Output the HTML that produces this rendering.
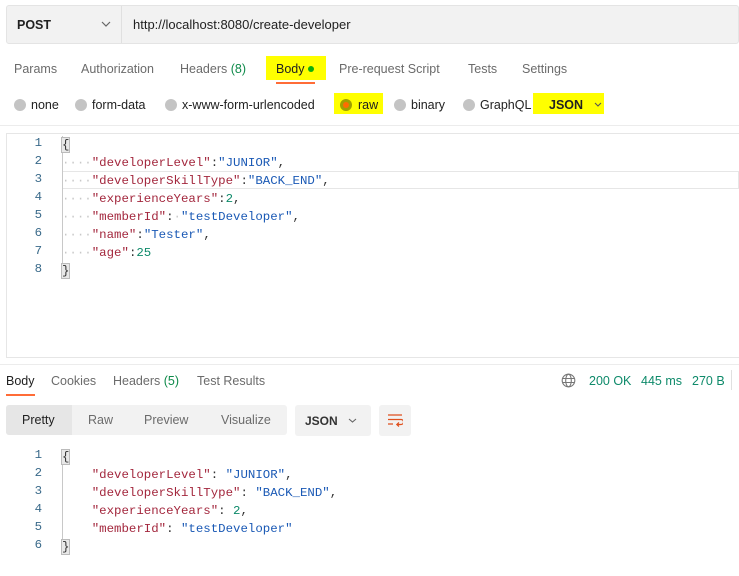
<!DOCTYPE html>
<html><head><meta charset="utf-8"><style>
*{box-sizing:border-box;margin:0;padding:0}
body{width:739px;height:576px;background:#fff;font-family:"Liberation Sans",sans-serif;font-size:12.5px;color:#212121;position:relative;overflow:hidden}
.a{position:absolute;white-space:nowrap}
.g{color:#6b6b6b}
.rad{position:absolute;width:12px;height:12px;border-radius:50%;background:#c4c4c4}
.code{font-family:"Liberation Mono",monospace;font-size:12.4px;color:#1f4fa0}
.ln{position:absolute;width:20px;text-align:right;color:#3a6a8a;font-family:"Liberation Mono",monospace;font-size:12.4px}
.k{color:#a3273d}.s{color:#1a59b5}.n{color:#0e8a6a}.d{color:#c8c8c8}.p{color:#333}
.hl{background:#ffff00}
</style></head><body>
<div class="a" style="left:6px;top:5px;width:733px;height:39px;background:#f2f2f2;border:1px solid #e4e4e4;border-radius:3px"></div>
<div class="a" style="left:121px;top:6px;width:1px;height:37px;background:#e0e0e0"></div>
<div class="a" style="left:17px;top:18px;font-weight:bold;font-size:12.5px;color:#212121">POST</div>
<svg class="a" style="left:101px;top:21px" width="10" height="6"><path d="M1 1l4 4 4-4" fill="none" stroke="#666" stroke-width="1.2"/></svg>
<div class="a" style="left:133px;top:17px;font-size:13px;color:#212121">http://localhost:8080/create-developer</div>

<div class="a g" style="left:14px;top:62px">Params</div>
<div class="a g" style="left:81px;top:62px">Authorization</div>
<div class="a g" style="left:180px;top:62px">Headers <span style="color:#0e8a4a">(8)</span></div>
<div class="a hl" style="left:266px;top:56px;width:60px;height:24px"></div>
<div class="a" style="left:276px;top:62px">Body</div>
<div class="a" style="left:308px;top:66px;width:6px;height:6px;border-radius:50%;background:#0cb00c"></div>
<div class="a" style="left:276px;top:82px;width:39px;height:2px;background:#ff6c37"></div>
<div class="a g" style="left:339px;top:62px">Pre-request Script</div>
<div class="a g" style="left:468px;top:62px">Tests</div>
<div class="a g" style="left:522px;top:62px">Settings</div>

<div class="rad" style="left:14px;top:99px"></div><div class="a" style="left:31px;top:98px">none</div>
<div class="rad" style="left:75px;top:99px"></div><div class="a" style="left:92px;top:98px">form-data</div>
<div class="rad" style="left:165px;top:99px"></div><div class="a" style="left:182px;top:98px">x-www-form-urlencoded</div>
<div class="a hl" style="left:334px;top:93px;width:49px;height:21px"></div>
<div class="rad" style="left:340px;top:99px;background:#a0a000"></div><div class="a" style="left:343px;top:102px;width:6px;height:6px;border-radius:50%;background:#ff6c00"></div>
<div class="a" style="left:358px;top:98px">raw</div>
<div class="rad" style="left:394px;top:99px"></div><div class="a" style="left:411px;top:98px">binary</div>
<div class="rad" style="left:463px;top:99px"></div><div class="a" style="left:480px;top:98px">GraphQL</div>
<div class="a hl" style="left:533px;top:93px;width:71px;height:21px"></div>
<div class="a" style="left:549px;top:98px;font-weight:bold;color:#222">JSON</div>
<svg class="a" style="left:594px;top:102px" width="8" height="5"><path d="M1 1l3 3 3-3" fill="none" stroke="#555" stroke-width="1.1"/></svg>
<div class="a" style="left:0;top:125px;width:739px;height:1px;background:#ececec"></div>

<div class="a" style="left:6px;top:133px;width:733px;height:225px;border:1px solid #e6e6e6;border-right:none"></div>
<div class="a" style="left:62px;top:136px;width:1px;height:142px;background:#c8c8c8"></div>
<div class="a" style="left:63px;top:171px;width:676px;height:18px;border:1px solid #e6e6e6;border-left:none"></div>
<div class="ln" style="left:22px;top:136px">1</div><div class="ln" style="left:22px;top:154px">2</div><div class="ln" style="left:22px;top:172px">3</div><div class="ln" style="left:22px;top:190px">4</div><div class="ln" style="left:22px;top:208px">5</div><div class="ln" style="left:22px;top:226px">6</div><div class="ln" style="left:22px;top:244px">7</div><div class="ln" style="left:22px;top:262px">8</div>
<div class="a code" style="left:62px;top:136px;line-height:18px">
<div><span class="p" style="background:#e8e8e8;outline:1px solid #bbb">{</span></div>
<div><span class="d">····</span><span class="k">"developerLevel"</span><span class="p">:</span><span class="s">"JUNIOR"</span><span class="p">,</span></div>
<div><span class="d">····</span><span class="k">"developerSkillType"</span><span class="p">:</span><span class="s">"BACK_END"</span><span class="p">,</span></div>
<div><span class="d">····</span><span class="k">"experienceYears"</span><span class="p">:</span><span class="n">2</span><span class="p">,</span></div>
<div><span class="d">····</span><span class="k">"memberId"</span><span class="p">:</span><span class="d">·</span><span class="s">"testDeveloper"</span><span class="p">,</span></div>
<div><span class="d">····</span><span class="k">"name"</span><span class="p">:</span><span class="s">"Tester"</span><span class="p">,</span></div>
<div><span class="d">····</span><span class="k">"age"</span><span class="p">:</span><span class="n">25</span></div>
<div><span class="p" style="background:#e8e8e8;outline:1px solid #bbb">}</span></div>
</div>

<div class="a" style="left:0;top:364px;width:739px;height:1px;background:#ececec"></div>
<div class="a" style="left:6px;top:374px">Body</div>
<div class="a" style="left:6px;top:394px;width:29px;height:2px;background:#ff6c37"></div>
<div class="a g" style="left:51px;top:374px">Cookies</div>
<div class="a g" style="left:113px;top:374px">Headers <span style="color:#0e8a4a">(5)</span></div>
<div class="a g" style="left:197px;top:374px">Test Results</div>
<svg class="a" style="left:561px;top:373px" width="15" height="15" fill="none" stroke="#777" stroke-width="1.1"><circle cx="7.5" cy="7.5" r="6.3"/><ellipse cx="7.5" cy="7.5" rx="2.8" ry="6.3"/><path d="M1.5 5.5h12M1.5 9.5h12"/></svg>
<div class="a" style="left:589px;top:374px;color:#0e8a6a">200 OK</div>
<div class="a" style="left:641px;top:374px;color:#0e8a6a">445 ms</div>
<div class="a" style="left:692px;top:374px;color:#0e8a6a">270 B</div>
<div class="a" style="left:731px;top:370px;width:1px;height:20px;background:#e0e0e0"></div>

<div class="a" style="left:6px;top:405px;width:281px;height:30px;background:#f2f2f2;border-radius:3px"></div>
<div class="a" style="left:6px;top:405px;width:66px;height:30px;background:#e6e6e6;border-radius:3px 0 0 3px"></div>
<div class="a" style="left:22px;top:413px">Pretty</div>
<div class="a g" style="left:88px;top:413px">Raw</div>
<div class="a g" style="left:144px;top:413px">Preview</div>
<div class="a g" style="left:221px;top:413px">Visualize</div>
<div class="a" style="left:295px;top:405px;width:76px;height:31px;background:#f2f2f2;border-radius:3px"></div>
<div class="a" style="left:305px;top:414px;font-weight:bold;font-size:12px;color:#333">JSON</div>
<svg class="a" style="left:348px;top:418px" width="9" height="5"><path d="M1 1l3.5 3 3.5-3" fill="none" stroke="#666" stroke-width="1.1"/></svg>
<div class="a" style="left:379px;top:405px;width:32px;height:31px;background:#f2f2f2;border-radius:3px"></div>
<svg class="a" style="left:387px;top:413px" width="16" height="14" fill="none" stroke="#e0501e" stroke-width="1.2"><path d="M1 2h14M1 6.5h13a2.5 2.5 0 0 1 0 5h-4M1 11h5M12 9.5l-2.2 2 2.2 2"/></svg>

<div class="a" style="left:62px;top:450px;width:1px;height:104px;background:#c8c8c8"></div>
<div class="ln" style="left:22px;top:448px">1</div><div class="ln" style="left:22px;top:466px">2</div><div class="ln" style="left:22px;top:484px">3</div><div class="ln" style="left:22px;top:502px">4</div><div class="ln" style="left:22px;top:520px">5</div><div class="ln" style="left:22px;top:538px">6</div>
<div class="a code" style="left:62px;top:448px;line-height:18px">
<div><span class="p" style="background:#e8e8e8;outline:1px solid #bbb">{</span></div>
<div>    <span class="k">"developerLevel"</span><span class="p">: </span><span class="s">"JUNIOR"</span><span class="p">,</span></div>
<div>    <span class="k">"developerSkillType"</span><span class="p">: </span><span class="s">"BACK_END"</span><span class="p">,</span></div>
<div>    <span class="k">"experienceYears"</span><span class="p">: </span><span class="n">2</span><span class="p">,</span></div>
<div>    <span class="k">"memberId"</span><span class="p">: </span><span class="s">"testDeveloper"</span></div>
<div><span class="p" style="background:#e8e8e8;outline:1px solid #bbb">}</span></div>
</div>
<style>.code div{white-space:pre}</style>
</body></html>
